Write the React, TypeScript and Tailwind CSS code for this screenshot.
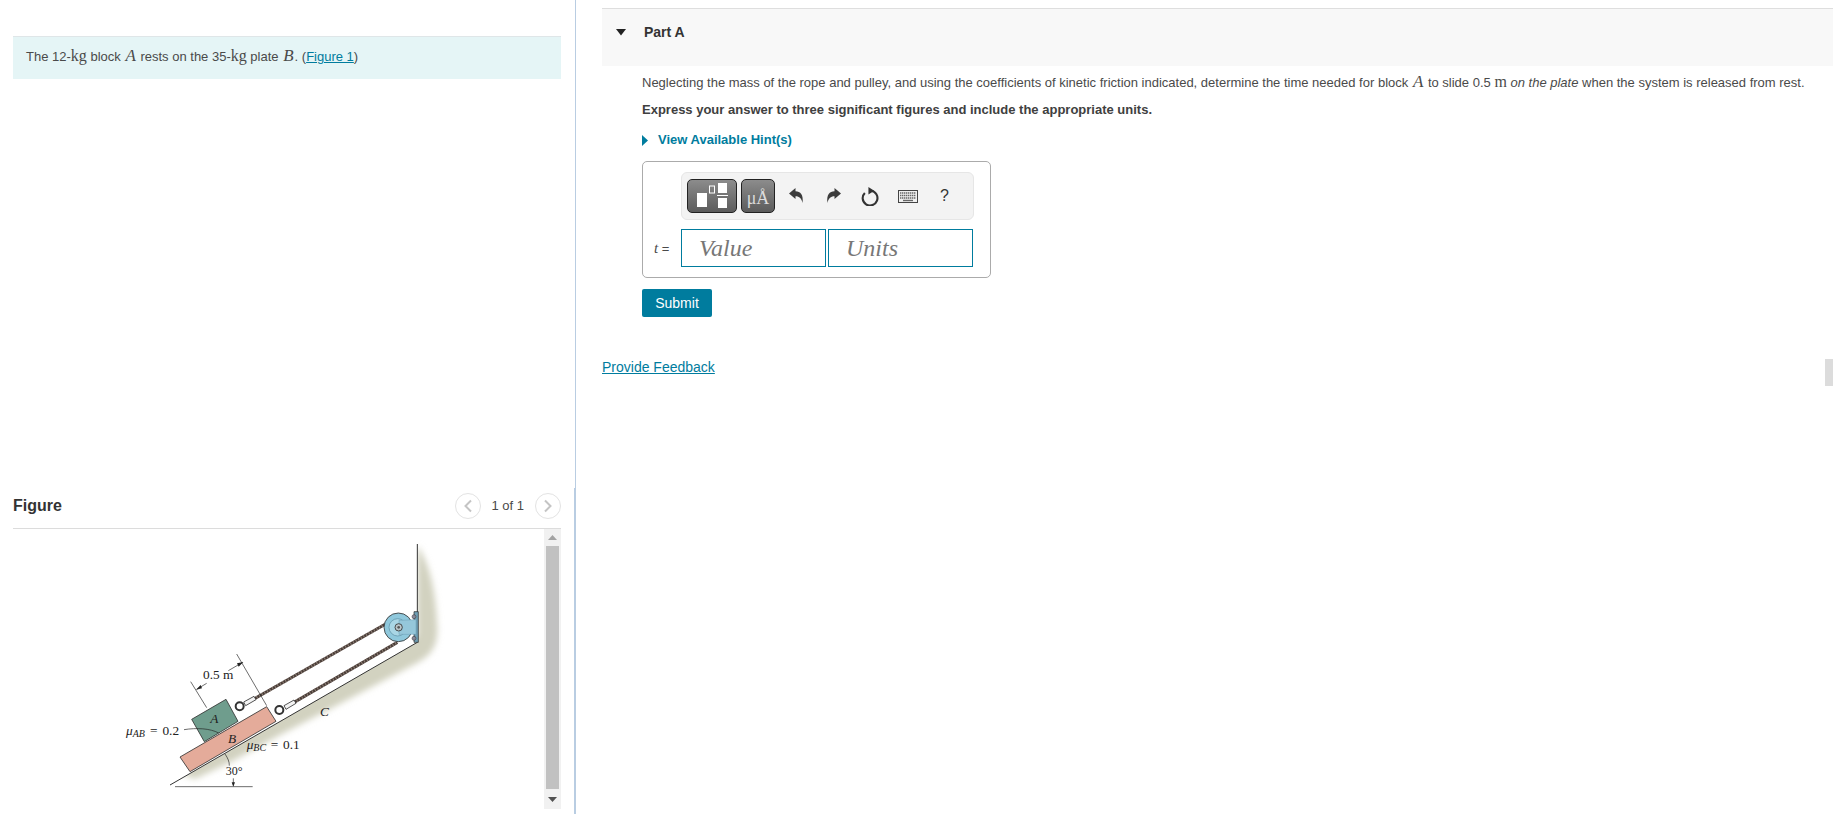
import React from "react";

const sans = "font-['Liberation_Sans',Arial,sans-serif]";
const serif = "font-['Liberation_Serif','Times_New_Roman',serif]";

function Figure() {
  const t = { fontFamily: "'Liberation Serif', serif", fill: "#222" } as const;
  return (
    <svg width="360" height="284" viewBox="0 0 1080 852" className="block shrink-0">
      <defs>
        <clipPath id="shadeClip">
          <path d="M952 30 L1080 30 L1080 852 L120 852 L210 768 L952 340 Z" />
        </clipPath>
        <filter id="blur" x="-20%" y="-20%" width="140%" height="140%">
          <feGaussianBlur stdDeviation="10" />
        </filter>
      </defs>
      <g clipPath="url(#shadeClip)">
        <path
          d="M952 50 C994 110 1008 200 1012 295 C1014 355 990 380 955 400 L700 535 L540 618 L400 695 L285 750 L240 735 L952 320 Z"
          fill="#d2d2c0"
          filter="url(#blur)"
        />
      </g>
      {/* incline and wall */}
      <path d="M210 768 L952 340 L952 45" fill="none" stroke="#333" strokeWidth="3" />
      {/* ropes */}
      <g fill="none">
        <path d="M462 510 L862 282" stroke="#4a3d38" strokeWidth="9" />
        <path d="M462 510 L862 282" stroke="#8f8177" strokeWidth="9" strokeDasharray="3 6" />
        <path d="M582 520 L892 340" stroke="#4a3d38" strokeWidth="9" />
        <path d="M582 520 L892 340" stroke="#8f8177" strokeWidth="9" strokeDasharray="3 6" />
      </g>
      {/* plate B */}
      <path d="M240 684 L500 533 L528 577 L270 728 Z" fill="#e4ab9a" stroke="#333" strokeWidth="2.5" />
      {/* block A */}
      <path d="M275 571 L378 511 L414 577 L313 638 Z" fill="#6f9d8d" stroke="#333" strokeWidth="2.5" />
      {/* hooks */}
      <g fill="#f3f3f3" stroke="#333" strokeWidth="2.5">
        <path d="M431 519 L462 502 L468 512 L437 530 Z" />
        <path d="M552 530 L582 513 L588 523 L558 541 Z" />
      </g>
      <g fill="none" stroke="#333" strokeWidth="6">
        <circle cx="419" cy="532" r="12" />
        <circle cx="538" cy="543" r="12" />
      </g>
      {/* pulley */}
      <path d="M942 248 L955 248 L955 340 L942 340 Z" fill="#6f9fb5" stroke="#222" strokeWidth="2" />
      <circle cx="942" cy="263" r="6" fill="#889" stroke="#333" strokeWidth="1.5" />
      <circle cx="942" cy="328" r="6" fill="#889" stroke="#333" strokeWidth="1.5" />
      <circle cx="895" cy="295" r="43" fill="#8fc8dc" stroke="#333" strokeWidth="2.5" />
      <circle cx="893" cy="295" r="26" fill="#a9d6e5" stroke="#5c8ea3" strokeWidth="2" />
      <path d="M897 274 L948 272 L948 316 L897 316 Z" fill="#95c7da" stroke="#6a9db2" strokeWidth="1.5" />
      <circle cx="896" cy="295" r="11" fill="#b8c4c8" stroke="#333" strokeWidth="2.5" />
      <circle cx="896" cy="295" r="4" fill="#555" />
      {/* dimension */}
      <g fill="none" stroke="#222" strokeWidth="2">
        <path d="M272 458 L320 536" />
        <path d="M410 375 L500 530" />
        <path d="M290 481 L320 463" />
        <path d="M385 425 L428 400" />
        <path d="M252 602 C290 596 330 598 356 612" />
        <path d="M375 675 C384 688 388 698 388 710" />
        <path d="M225 773 L458 773" />
        <path d="M400 748 L400 770" />
      </g>
      <path d="M288 482 L302 468 L306 478 Z M430 399 L416 413 L411 403 Z M400 773 L395 760 L405 760 Z" fill="#222" />
      <text x="309" y="449" fontSize="40" style={t}>0.5 m</text>
      <text x="331" y="582" fontSize="40" fontStyle="italic" style={t}>A</text>
      <text x="384" y="641" fontSize="40" fontStyle="italic" style={t}>B</text>
      <text x="660" y="561" fontSize="40" fontStyle="italic" style={t}>C</text>
      <text x="78" y="619" fontSize="40" wordSpacing="5" style={t}>
        <tspan fontStyle="italic">μ</tspan>
        <tspan fontStyle="italic" fontSize="30" dy="6">AB</tspan>
        <tspan dy="-6"> = 0.2</tspan>
      </text>
      <text x="440" y="660" fontSize="40" wordSpacing="4" style={t}>
        <tspan fontStyle="italic">μ</tspan>
        <tspan fontStyle="italic" fontSize="30" dy="6">BC</tspan>
        <tspan dy="-6"> = 0.1</tspan>
      </text>
      <text x="377" y="738" fontSize="36" style={t}>30°</text>
    </svg>
  );
}

function Pager({ dir }: { dir: "l" | "r" }) {
  return (
    <span className="flex h-[26px] w-[26px] items-center justify-center rounded-full border border-[#e3e3e3] bg-white">
      <svg width="10" height="14" viewBox="0 0 10 14">
        <path
          d={dir === "l" ? "M8 1.5 L2.5 7 L8 12.5" : "M2 1.5 L7.5 7 L2 12.5"}
          fill="none"
          stroke="#c4c4c4"
          strokeWidth="2"
        />
      </svg>
    </span>
  );
}

function Toolbar() {
  return (
    <div className="ml-[38px] flex h-[48px] w-[293px] items-center rounded-[6px] border border-[#e6e6e6] bg-[#f3f3f3] pl-[5px]">
      <span className="flex h-[34px] w-[50px] items-center justify-center rounded-[5px] border border-[#222] bg-gradient-to-b from-[#8c8c8c] to-[#5c5c5c]">
        <svg width="32" height="26" viewBox="0 0 32 26">
          <rect x="1" y="10" width="10" height="14" fill="#fff" />
          <rect x="13.5" y="3" width="5" height="7" fill="none" stroke="#fff" strokeWidth="1" />
          <rect x="22" y="0" width="9" height="10" fill="#fff" />
          <rect x="21" y="12" width="11" height="1" fill="#fff" />
          <rect x="22" y="15" width="9" height="10" fill="#fff" />
        </svg>
      </span>
      <span
        className={`ml-[4px] flex h-[34px] w-[34px] items-center justify-center rounded-[5px] border border-[#222] bg-gradient-to-b from-[#8c8c8c] to-[#5c5c5c] pt-[3px] text-[18px] leading-none text-[#dcdcdc] ${serif}`}
      >
        μÅ
      </span>
      <span className="ml-[12px] flex h-[20px] w-[18px] items-center justify-center">
        <svg width="15" height="16" viewBox="0 0 15 16">
          <path d="M0 5.5 L6.5 0 L6.5 3.2 C11.5 3.2 14.5 6.5 13.6 15 C12.4 10.5 10.5 8.3 6.5 8.3 L6.5 11 Z" fill="#3c3c3c" />
        </svg>
      </span>
      <span className="ml-[19px] flex h-[20px] w-[18px] items-center justify-center">
        <svg width="15" height="16" viewBox="0 0 15 16">
          <path d="M15 5.5 L8.5 0 L8.5 3.2 C3.5 3.2 0.5 6.5 1.4 15 C2.6 10.5 4.5 8.3 8.5 8.3 L8.5 11 Z" fill="#3c3c3c" />
        </svg>
      </span>
      <span className="ml-[19px] flex h-[20px] w-[18px] items-center justify-center">
        <svg width="18" height="19" viewBox="0 0 17 18">
          <path d="M9.5 3.6 A7 7 0 1 1 3.6 5.6" fill="none" stroke="#333" strokeWidth="2" />
          <path d="M7 0 L12.5 3.6 L7 7 Z" fill="#333" />
        </svg>
      </span>
      <span className="ml-[18px] flex h-[20px] w-[22px] items-center justify-center">
        <svg width="20" height="13" viewBox="0 0 20 13">
          <rect x="0.5" y="0.5" width="19" height="12" fill="#f0f0f0" stroke="#444" />
          <path d="M2 3 H18 M2 5.5 H18 M2 8 H18" stroke="#666" strokeWidth="1.4" strokeDasharray="1.4 0.6" />
          <path d="M5 10.5 H15" stroke="#666" strokeWidth="1.4" />
        </svg>
      </span>
      <span className={`ml-[21px] text-[16px] leading-none text-[#333] ${sans}`}>?</span>
    </div>
  );
}

export default function App() {
  return (
    <div className={`flex h-[814px] w-[1833px] overflow-hidden bg-white text-[#4a4a4a] ${sans}`}>
      {/* Left panel */}
      <div className="flex h-full w-[574px] shrink-0 flex-col pl-[13px] pr-[13px]">
        <div className="mt-[36px] flex h-[43px] items-center border-t border-[#dfe6e8] bg-[#e5f5f6] pb-[2px] pl-[13px] text-[13px]">
          <span>
            The 12-<span className={`text-[16px] leading-none ${serif}`}>kg</span> block{" "}
            <span className={`mx-px text-[17px] leading-none italic ${serif}`}>A</span> rests on the 35-
            <span className={`text-[16px] leading-none ${serif}`}>kg</span> plate{" "}
            <span className={`mx-px text-[17px] leading-none italic ${serif}`}>B</span>. (
            <span className="text-[#007c9e] underline">Figure 1</span>)
          </span>
        </div>
        <div className="mt-auto flex h-[49px] items-center justify-between border-b border-[#dcdcdc] pt-[4px]">
          <span className="text-[16px] font-bold text-[#333]">Figure</span>
          <span className="flex items-center gap-[10px] text-[13px]">
            <Pager dir="l" />
            <span className="mr-px">1 of 1</span>
            <Pager dir="r" />
          </span>
        </div>
        <div className="mb-[5px] flex h-[280px] justify-between overflow-hidden">
          <div className="ml-[87px]">
            <Figure />
          </div>
          <div className="flex w-[17px] flex-col items-center bg-[#f1f1f1]">
            <div className="flex h-[17px] shrink-0 items-center justify-center">
              <svg width="9" height="5" viewBox="0 0 9 5">
                <path d="M4.5 0 L9 5 L0 5 Z" fill="#a3a3a3" />
              </svg>
            </div>
            <div className="h-[243px] w-[13px] shrink-0 bg-[#c1c1c1]" />
            <div className="flex flex-1 items-center justify-center">
              <svg width="9" height="5" viewBox="0 0 9 5">
                <path d="M4.5 5 L9 0 L0 0 Z" fill="#505050" />
              </svg>
            </div>
          </div>
        </div>
      </div>

      {/* Divider */}
      <div className="flex h-full w-[2px] shrink-0 flex-col items-end">
        <div className="h-[488px] w-px bg-[#b9cde2]" />
        <div className="w-[2px] flex-1 bg-[#b9cde2]" />
      </div>

      {/* Right panel */}
      <div className="relative min-w-0 flex-1 pl-[26px]">
        <div className="mt-[8px] flex h-[58px] items-start border-t border-[#dedede] bg-[#f8f8f8] pt-[15px]">
          <svg width="10" height="7" viewBox="0 0 10 7" className="ml-[14px] mt-[5px]">
            <path d="M0 0 H10 L5 6.5 Z" fill="#222" />
          </svg>
          <span className="ml-[18px] text-[14px] font-bold leading-[16px] text-[#333]">Part A</span>
        </div>
        <div className="pl-[40px] text-[13px]">
          <p className="mt-[7px] h-[20px] whitespace-nowrap leading-[20px]">
            Neglecting the mass of the rope and pulley, and using the coefficients of kinetic friction indicated,
            determine the time needed for block{" "}
            <span className={`mx-px text-[17px] leading-none italic ${serif}`}>A</span> to slide 0.5{" "}
            <span className={`text-[16px] leading-none ${serif}`}>m</span> <em>on the plate</em> when the system is
            released from rest.
          </p>
          <p className="mt-[7px] h-[20px] whitespace-nowrap font-bold leading-[20px] text-[#404040]">
            Express your answer to three significant figures and include the appropriate units.
          </p>
          <div className="mt-[10px] flex h-[20px] items-center font-bold text-[#007c9e]">
            <svg width="6" height="11" viewBox="0 0 6 11" className="mr-[10px]">
              <path d="M0 0 L6 5.5 L0 11 Z" fill="#007c9e" />
            </svg>
            <span>View Available Hint(s)</span>
          </div>

          <div className="mt-[11px] h-[117px] w-[349px] rounded-[5px] border border-[#ababab] pt-[10px]">
            <Toolbar />
            <div className="mt-[9px] flex items-center">
              <span className="w-[38px] pl-[11px] text-[13px] leading-none">
                <span className={`text-[15px] italic ${serif}`}>t</span> =
              </span>
              <div
                className={`flex h-[38px] w-[145px] items-center border border-[#007c9e] pl-[17px] text-[24px] italic text-[#777] ${serif}`}
              >
                Value
              </div>
              <div
                className={`ml-[2px] flex h-[38px] w-[145px] items-center border border-[#007c9e] pl-[17px] text-[24px] italic text-[#777] ${serif}`}
              >
                Units
              </div>
            </div>
          </div>

          <div className="mt-[11px] flex h-[28px] w-[70px] items-center justify-center rounded-[2px] bg-[#007c9e] text-[14px] text-white">
            Submit
          </div>
        </div>
        <div className="mt-[40px] text-[14px] text-[#007c9e] underline">Provide Feedback</div>
        <div className="absolute right-0 top-[359px] h-[27px] w-[8px] bg-[#dcdcdc]" />
      </div>
    </div>
  );
}
